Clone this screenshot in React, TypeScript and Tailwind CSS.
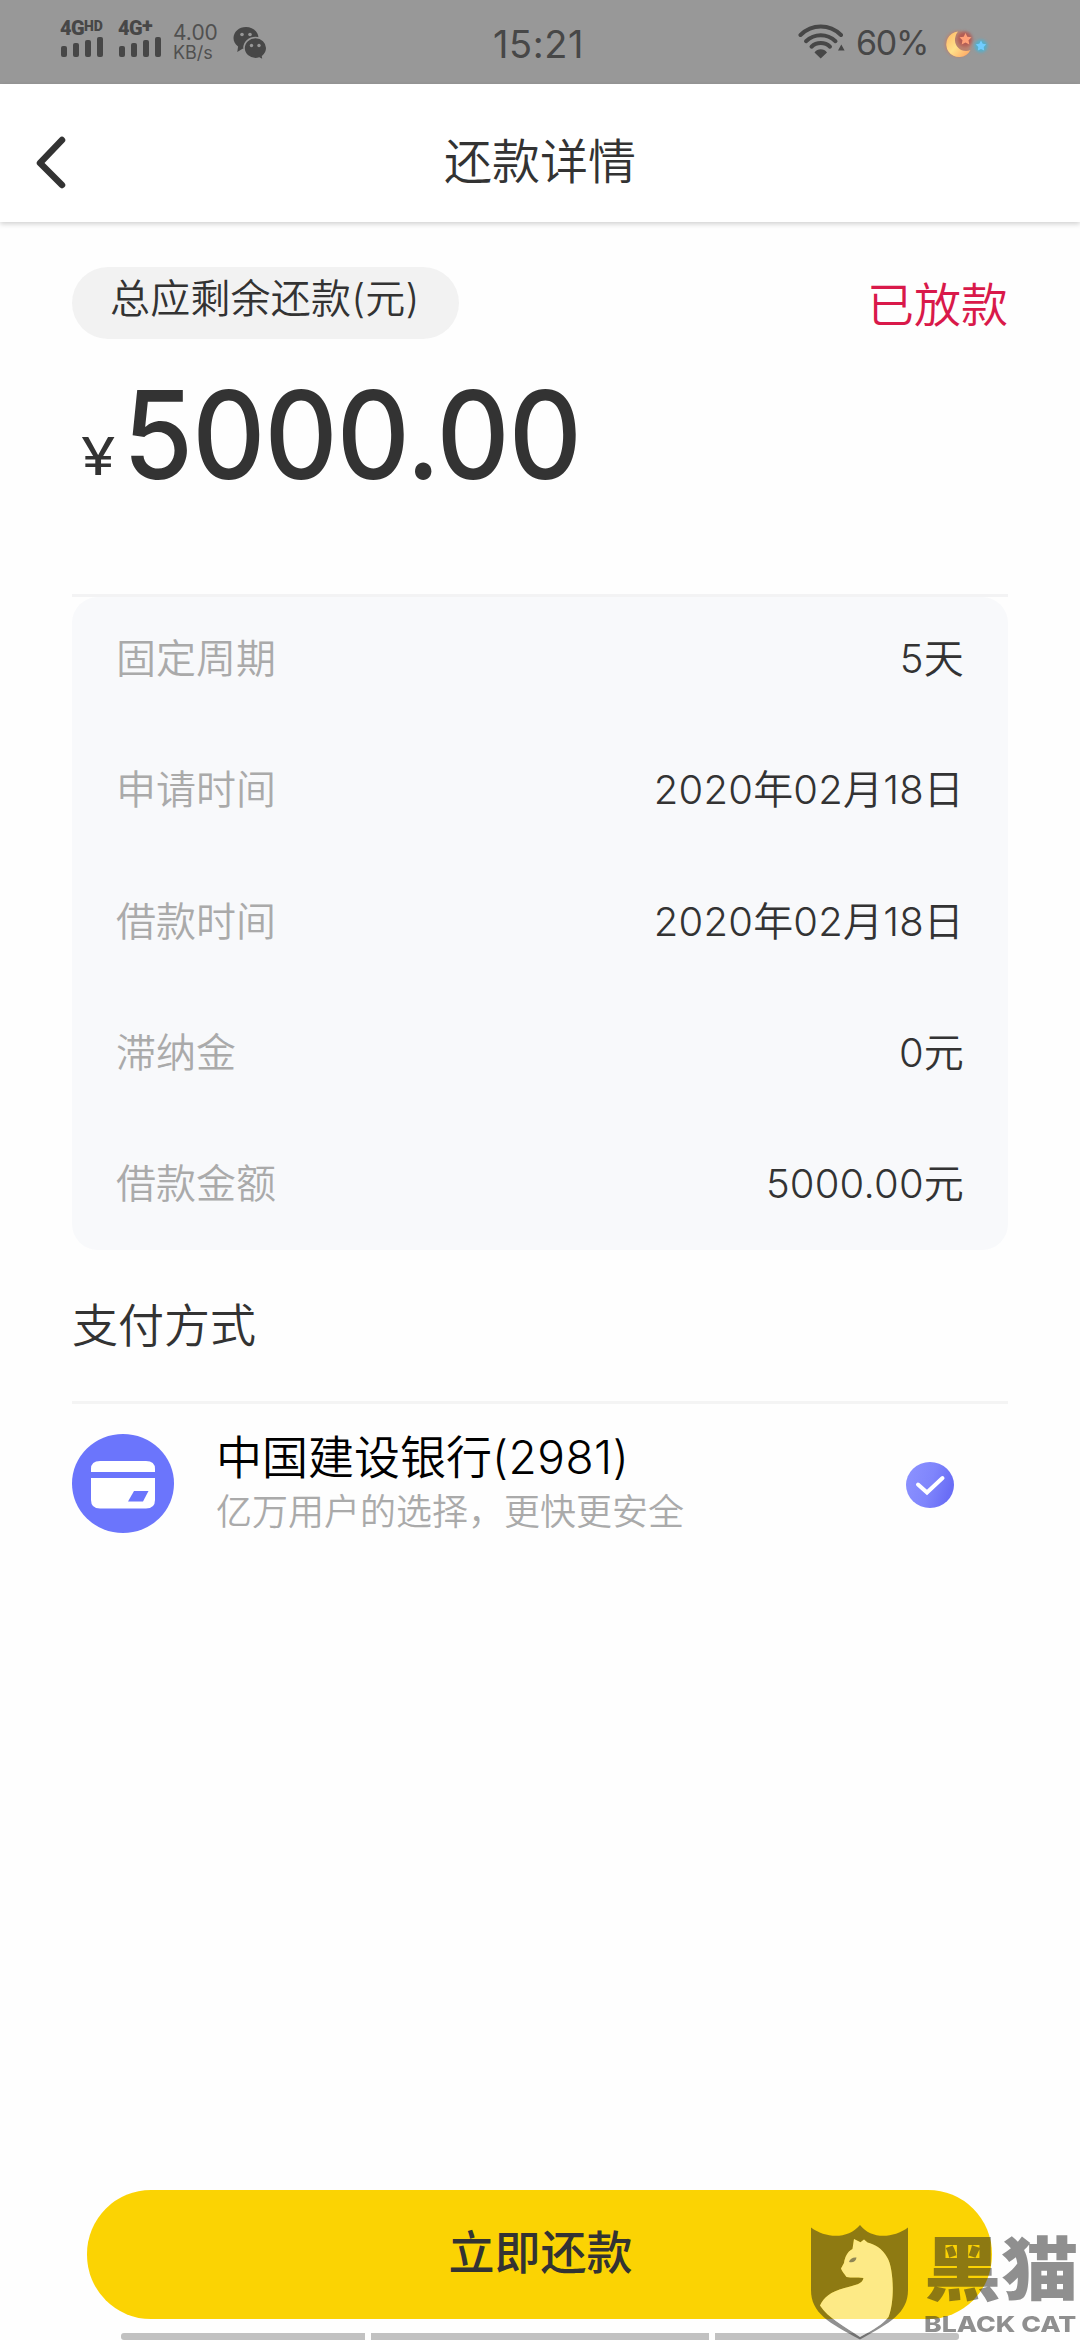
import React from "react";

const details = [
  { label: "固定周期", value: "5天" },
  { label: "申请时间", value: "2020年02月18日" },
  { label: "借款时间", value: "2020年02月18日" },
  { label: "滞纳金", value: "0元" },
  { label: "借款金额", value: "5000.00元" },
];

function Signal({ suffix }: { suffix: string }) {
  return (
    <div className="w-[45px]">
      <div className="flex h-[15px] items-start whitespace-nowrap font-['Roboto',sans-serif] font-black leading-[15px]">
        <span className="w-[24px] text-[20px] tracking-[-0.5px]">4G</span>
        <span className={suffix === "+" ? "-mt-[3px] text-[20px]" : "-mt-[2px] text-[14px]"}>{suffix}</span>
      </div>
      <div className="mt-[1px] flex h-[20px] items-end gap-[6px] pl-[1px]">
        <i className="h-[11px] w-[6px] rounded-[2px] bg-[#474747]" />
        <i className="h-[14px] w-[6px] rounded-[2px] bg-[#474747]" />
        <i className="h-[17px] w-[6px] rounded-[2px] bg-[#474747]" />
        <i className="h-[20px] w-[6px] rounded-[2px] bg-[#474747]" />
      </div>
    </div>
  );
}

function WeChat() {
  return (
    <svg className="h-[34px] w-[34px]" viewBox="0 0 34 34">
      <path fill="#474747" d="M13 1C6 1 .5 5.800.5 12c0 3.500 1.800 6.500 4.600 8.500L4.300 26l5.200-3.300c1 .2 2 .3 3 .3 C20 23 25.500 18 25.500 12S20 1 13 1Z" />
      <path fill="#474747" stroke="#989898" strokeWidth="1.600" d="M22.500 11.500c-6.300 0-11.500 4.600-11.500 10.600s5.200 10.600 11.500 10.600c1.300 0 2.600-.2 3.800-.6l4 2-.7-3.800c2.700-2 4.200-4.900 4.200-8.200 0-6-5-10.600-11.300-10.600Z" />
      <g fill="#989898">
        <circle cx="9" cy="8.500" r="1.800" />
        <circle cx="17" cy="8.500" r="1.800" />
        <circle cx="18.500" cy="19.500" r="1.700" />
        <circle cx="26" cy="19.500" r="1.700" />
      </g>
    </svg>
  );
}

function Wifi() {
  return (
    <svg className="h-[35px] w-[48px]" viewBox="0 0 48 35">
      <g fill="none" stroke="#474747" strokeWidth="4" strokeLinecap="round">
        <path d="M2.500 11C14-.300 31.500-.300 43 11" />
        <path d="M8 17.200c8.500-8 21-8 29.500 0" />
        <path d="M13.500 22.700c5-4.800 13.500-4.800 18.500 0" />
      </g>
      <path fill="#474747" d="M16.500 28.500c3-4.300 9.500-4.300 12.500 0L22.700 34.500ZM40 26.500l3.300-6 3.300 6Z" />
    </svg>
  );
}

function MoonStars() {
  return (
    <svg className="h-[40px] w-[52px]" viewBox="0 0 52 40">
      <defs>
        <filter id="glow" x="-50%" y="-50%" width="200%" height="200%">
          <feGaussianBlur stdDeviation="1.500" />
        </filter>
        <linearGradient id="moon" x1="0" y1="0" x2="1" y2="1">
          <stop offset="0" stopColor="#ffb765" />
          <stop offset=".5" stopColor="#ffe08a" />
          <stop offset="1" stopColor="#ff9f5e" />
        </linearGradient>
      </defs>
      <circle cx="18" cy="20" r="13" fill="#c8785f" opacity=".7" filter="url(#glow)" />
      <circle cx="25" cy="15" r="7.500" fill="#b0504c" opacity=".75" filter="url(#glow)" />
      <circle cx="41" cy="22" r="6.500" fill="#4bb3d2" opacity=".85" filter="url(#glow)" />
      <path fill="url(#moon)" d="M18 7.500A12.800 12.800 0 1 0 30.500 26C22 30 12.500 21.500 15.500 12.500c.5-2 1.300-3.400 2.500-5Z" />
      <path fill="#ffa078" d="m25.500 9 1.800 3.700 4.200.5-3 3 .8 4.200-3.800-2-3.800 2 .8-4.200-3-3 4.200-.5Z" />
      <path fill="#71cdff" d="m41 16.500 1.700 3.200 3.500.6-2.500 2.600.5 3.600-3.200-1.600-3.200 1.600.5-3.600-2.500-2.600 3.500-.6Z" />
    </svg>
  );
}

function StatusBar() {
  return (
    <header className="flex h-[84px] bg-[#989898] text-[#474747]">
      <div className="flex w-[493px] items-start pl-[60px] pt-[21px]">
        <Signal suffix="HD" />
        <div className="ml-[13px]">
          <Signal suffix="+" />
        </div>
        <div className="ml-[10px] mt-[2px] w-[48px] font-['Inter',sans-serif] text-[21px] leading-[20px] text-[#505050]">
          <div>4.00</div>
          <div className="text-[18px]">KB/s</div>
        </div>
        <div className="ml-[12px] mt-[5px]">
          <WeChat />
        </div>
      </div>
      <div className="flex-1 pt-[22px] font-['Inter',sans-serif] text-[38px] leading-[44px] tracking-[0.600px]">15:21</div>
      <div className="flex items-start pr-[88px] pt-[24px]">
        <Wifi />
        <span className="ml-[10px] w-[72px] whitespace-nowrap font-['Inter',sans-serif] text-[34px] leading-[38px] tracking-[-1.300px]">60%</span>
        <div className="ml-[12px]">
          <MoonStars />
        </div>
      </div>
    </header>
  );
}

function CardIcon() {
  return (
    <svg className="h-[99px] w-[102px]" viewBox="0 0 102 99">
      <ellipse cx="51" cy="49.500" rx="51" ry="49.500" fill="#6b75fc" />
      <path fill="#fff" d="M19 38v-3q0-8 9-8h46q9 0 9 8v3ZM19 44h64v22q0 8.500-9 8.500H28q-9 0-9-8.500Z" />
      <path fill="#6b75fc" d="M62 57h14.500L71 67.500H56Z" />
    </svg>
  );
}

function Watermark() {
  return (
    <div className="absolute bottom-0 right-0 flex h-[116px] w-[270px]">
      <svg className="h-[116px] w-[99px] shrink-0" viewBox="0 0 99 116">
        <path
          fill="#222"
          fillOpacity=".5"
          fillRule="evenodd"
          d="M1 3.500C16 14.500 38 15.500 50 1 61 15.500 83 14.500 98 3.500V66c0 23-18 33-48 49.500C19 99 1 89 1 66ZM44 15l-1.500 10C37 28 35 33 34 39l-3 5.500c1 3 3 5 5.500 8.500 5 1 10 0 17 1-1 6-8 7-19 10-14 3.500-21 10-24.500 17.500C18 94 34 102 50 113c14-7.500 23-13 28.500-20 7-18 4.500-50-1-59C72 24 64 20 57.500 18.500L54 15.500l-3.500 2.800Z"
        />
        <path
          fill="#fff"
          fillOpacity=".52"
          d="m44 15-1.500 10C37 28 35 33 34 39l-3 5.500c1 3 3 5 5.500 8.500 5 1 10 0 17 1-1 6-8 7-19 10-14 3.500-21 10-24.500 17.500C18 94 34 102 50 113c14-7.500 23-13 28.500-20 7-18 4.500-50-1-59C72 24 64 20 57.500 18.500L54 15.500l-3.500 2.800Z"
        />
        <path fill="#222" fillOpacity=".5" d="M39 38c1-3.500 4-5 7.500-4.500-.5 4-3.500 5.500-7.500 4.500Z" />
      </svg>
      <div className="ml-[15px] w-[156px] text-[#222] opacity-50">
        <div className="h-[86px] origin-left scale-x-[1.120] whitespace-nowrap font-['Noto_Sans_CJK_SC',sans-serif] text-[69px] font-black leading-[82px]">黑猫</div>
        <div className="origin-left scale-x-[1.210] whitespace-nowrap font-['Inter',sans-serif] text-[22px] font-extrabold leading-[28px]">BLACK CAT</div>
      </div>
    </div>
  );
}

export default function App() {
  return (
    <div className="relative flex h-[2340px] w-[1080px] flex-col overflow-hidden bg-[#fefefe] font-['Inter','Noto_Sans_CJK_SC',sans-serif] text-[#333]">
      <StatusBar />
      <nav className="flex h-[138px] items-center bg-white pt-[18px] shadow-[0_2px_5px_rgba(0,0,0,0.18)]">
        <svg className="ml-[34px] mt-[2px] h-[54px] w-[34px]" viewBox="0 0 34 54">
          <path d="M28 5 6 28l22 22" transform="translate(0 -1)" fill="none" stroke="#333" strokeWidth="6.500" strokeLinecap="round" strokeLinejoin="round" />
        </svg>
        <h1 className="mr-[68px] flex-1 text-center text-[48px] font-[350] leading-[72px]">还款详情</h1>
      </nav>

      <main className="flex flex-1 flex-col px-[72px]">
        <div className="mt-[45px] flex h-[72px] items-start justify-between">
          <div className="h-[72px] w-[387px] whitespace-nowrap rounded-[36px] bg-[#f2f2f2] pl-[38px] text-[40px] font-[350] leading-[64px] tracking-[0.200px]">
            总应剩余还款(元)
          </div>
          <div className="text-[47px] font-[350] leading-[76px] text-[#d9194a]">已放款</div>
        </div>
        <div className="mt-[20px] flex h-[120px] items-baseline whitespace-nowrap pl-[9px] leading-[152px]">
          <span className="w-[42px] origin-left -translate-y-[4px] scale-x-[1.200] text-[52px]">¥</span>
          <span className="origin-left scale-x-[0.930] text-[122px] font-medium tracking-[-1px]">5000.00</span>
        </div>
        <div className="mt-[115px] h-[3px] bg-[#f3f3f4]" />

        <section className="h-[653px] rounded-[26px] bg-[#f8f9fb] px-[44px] text-[40px] font-[350]">
          {details.map((d) => (
            <div key={d.label} className="flex h-[131.250px] justify-between leading-[124px]">
              <span className="text-[#aaa]">{d.label}</span>
              <span className="tracking-[0.200px]">{d.value}</span>
            </div>
          ))}
        </section>

        <h2 className="mt-[41px] text-[46px] font-[350] leading-[68px]">支付方式</h2>
        <div className="mt-[42px] h-[3px] bg-[#f4f4f4]" />
        <div className="mt-[30px] flex h-[99px]">
          <CardIcon />
          <div className="ml-[42px] flex-1 font-[350]">
            <div className="text-[46px] leading-[46px] text-black">
              中国建设银行<span className="tracking-[0.500px]">(2981)</span>
            </div>
            <div className="mt-[10px] text-[36px] leading-[44px] text-[#aaa]">亿万用户的选择，更快更安全</div>
          </div>
          <svg className="mr-[54px] mt-[28px] h-[46px] w-[48px]" viewBox="0 0 48 46">
            <defs>
              <linearGradient id="tick" x1="0" y1="0" x2="1" y2="0.300">
                <stop offset="0" stopColor="#8d93ff" />
                <stop offset=".6" stopColor="#7f85fc" />
                <stop offset="1" stopColor="#6a6ef6" />
              </linearGradient>
            </defs>
            <ellipse cx="24" cy="23" rx="24" ry="23" fill="url(#tick)" />
            <path d="m12 22.500 9 8L36.500 16" fill="none" stroke="#fff" strokeWidth="4" strokeLinecap="round" />
          </svg>
        </div>

        <button className="mb-[21px] ml-[15px] mr-[16px] mt-auto h-[129px] shrink-0 rounded-[64px] bg-[#fbd303] pb-[6px] pl-[2px] text-[46px] font-medium leading-[120px]">
          立即还款
        </button>
      </main>
      <div className="absolute bottom-0 left-[121px] flex h-[7px] gap-[6px]">
        <i className="w-[244px] rounded-l-[3px] bg-[#c1c1c1]" />
        <i className="w-[338px] bg-[#c1c1c1]" />
        <i className="w-[244px] rounded-r-[3px] bg-[#c1c1c1]" />
      </div>
      <Watermark />
    </div>
  );
}
